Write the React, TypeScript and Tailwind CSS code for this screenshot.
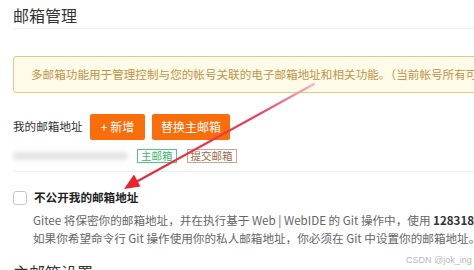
import React from 'react';

const App: React.FC = () => {
  return (
    <div
      className="relative w-[474px] h-[270px] overflow-hidden bg-white"
      style={{ fontFamily: '"Microsoft YaHei", "Noto Sans CJK SC", "Noto Sans", sans-serif' }}
    >
      <div className="pl-[13px]">
        {/* Title */}
        <div className="pt-[4px] h-[29px] text-[16px] leading-[22px] text-[#333] border-b border-[#eeeeee]">邮箱管理</div>

        {/* Notice */}
        <div className="mt-[27px] h-[37px] w-[480px] flex items-center pl-[17px] bg-[#fffbe8] border border-[#e3c985] rounded-[3px] whitespace-nowrap text-[11.6px] text-[#c0934a]">
          多邮箱功能用于管理控制与您的帐号关联的电子邮箱地址和相关功能。（当前帐号所有可
        </div>

        {/* My emails */}
        <div className="mt-[21px] flex items-center h-[26px]">
          <span className="text-[11.6px] text-[#333] w-[77px]">我的邮箱地址</span>
          <button className="h-[26px] w-[55px] bg-[#f96e0a] text-white text-[12px] rounded-[2px]">+ 新增</button>
          <button className="ml-[7px] h-[26px] w-[78px] bg-[#f96e0a] text-white text-[12px] rounded-[2px]">替换主邮箱</button>
        </div>

        <div className="mt-[8px] h-[24px] border-b border-[#eeeeee]">
          <div className="flex items-center h-[16px]">
            <div className="w-[115px] h-[8px] bg-[#e4e4e4] rounded-full blur-[2px]" />
            <span className="ml-[9px] px-[3px] h-[14px] leading-[12px] border border-[#52c77f] text-[#3bb56a] text-[10.5px]">主邮箱</span>
            <span className="ml-[10px] px-[3px] h-[14px] leading-[12px] border border-[#c8a78f] text-[#9b6a4a] text-[10.5px]">提交邮箱</span>
          </div>
        </div>

        {/* Checkbox option */}
        <div className="mt-[17px] flex items-center">
          <span className="w-[14px] h-[14px] border border-[#c8c8c8] rounded-[3px] bg-white" />
          <span className="ml-[7px] text-[11.6px] font-bold text-[#222]">不公开我的邮箱地址</span>
        </div>
        <div className="ml-[20px] mt-[5px] text-[11.6px] leading-[18px] text-[#666] whitespace-nowrap">
          <div>
            Gitee 将保密你的邮箱地址，并在执行基于 Web | WebIDE 的 Git 操作中，使用 <b className="text-[#333]">1283186227</b>
          </div>
          <div>如果你希望命令行 Git 操作使用你的私人邮箱地址，你必须在 Git 中设置你的邮箱地址。</div>
        </div>

        <div className="mt-[14px] text-[16px] leading-[22px] text-[#333]">主邮箱设置</div>
      </div>

      {/* Watermark */}
      <div className="absolute left-[406px] top-[254px] text-[9px] text-[#b8b8b8]" style={{ fontFamily: '"Liberation Sans", sans-serif' }}>
        CSDN @jok_ing
      </div>

      {/* Red annotation arrow */}
      <svg className="absolute inset-0 pointer-events-none" width="474" height="270" viewBox="0 0 474 270">
        <defs>
          <linearGradient id="arrowGrad" x1="314" y1="84" x2="125" y2="188" gradientUnits="userSpaceOnUse">
            <stop offset="0" stopColor="#f3b3c0" />
            <stop offset="0.3" stopColor="#e8405a" />
            <stop offset="1" stopColor="#e8242f" />
          </linearGradient>
        </defs>
        <path d="M314 84 L136 182" stroke="url(#arrowGrad)" strokeWidth="2" strokeLinecap="round" />
        <path d="M124 189 L140.5 186.5 L134 174.5 Z" fill="#e8242f" />
      </svg>
    </div>
  );
};

export default App;
